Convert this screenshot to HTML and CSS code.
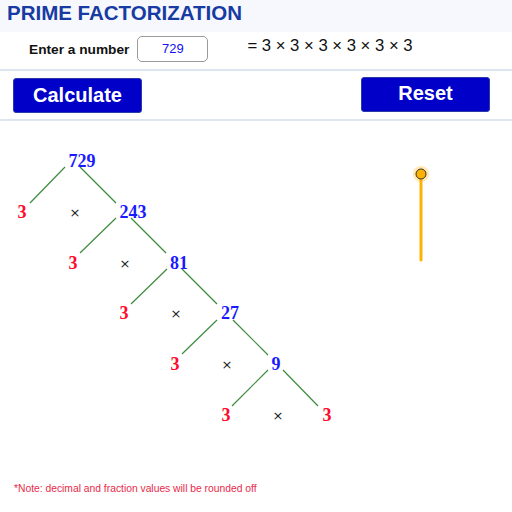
FILE: index.html
```html
<!DOCTYPE html>
<html>
<head>
<meta charset="utf-8">
<link rel="stylesheet" href="styles.css">
</head>
<body>
<div class="app">
  <div class="header"><h1 class="title">PRIME FACTORIZATION</h1></div>
  <div class="inputrow">
    <span class="label">Enter a number</span>
    <div class="numbox">729</div>
    <span class="result">= 3 × 3 × 3 × 3 × 3 × 3</span>
  </div>
  <div class="btnrow">
    <button class="btn btn-calc">Calculate</button>
    <button class="btn btn-reset">Reset</button>
  </div>
  <svg class="canvas" width="512" height="362" viewBox="0 121 512 362">
    <g class="edges">
      <line x1="65" y1="167" x2="30" y2="203"/>
      <line x1="80" y1="167" x2="116" y2="203"/>
      <line x1="116" y1="218" x2="80" y2="253"/>
      <line x1="131" y1="218" x2="166" y2="253"/>
      <line x1="167" y1="269" x2="131" y2="304"/>
      <line x1="182" y1="269" x2="217" y2="304"/>
      <line x1="217" y1="320" x2="182" y2="354"/>
      <line x1="233" y1="320" x2="268" y2="355"/>
      <line x1="268" y1="370" x2="232" y2="406"/>
      <line x1="283" y1="370" x2="318" y2="406"/>
    </g>
    <g class="comp">
      <text x="82" y="167">729</text>
      <text x="133" y="218">243</text>
      <text x="179" y="269">81</text>
      <text x="230" y="319">27</text>
      <text x="276" y="370">9</text>
    </g>
    <g class="prime">
      <text x="22" y="218">3</text>
      <text x="73" y="269">3</text>
      <text x="124" y="319">3</text>
      <text x="175" y="370">3</text>
      <text x="226" y="421">3</text>
      <text x="327" y="421">3</text>
    </g>
    <g class="times">
      <text x="75" y="217">×</text>
      <text x="125" y="268">×</text>
      <text x="176" y="318">×</text>
      <text x="227" y="369">×</text>
      <text x="278" y="420">×</text>
    </g>
    <g class="slider">
      <line x1="421" y1="174" x2="421" y2="260"/>
      <circle class="halo" cx="421" cy="174" r="8"/>
      <circle class="knob" cx="421" cy="174" r="5"/>
    </g>
  </svg>
  <p class="note">*Note: decimal and fraction values will be rounded off</p>
</div>
</body>
</html>
```
FILE: styles.css
```css
html, body {
  margin: 0;
  padding: 0;
  background: #ffffff;
  font-family: "Liberation Sans", Arial, sans-serif;
}
.app {
  width: 512px;
  height: 512px;
  overflow: hidden;
}
.header {
  height: 32px;
  background: #f6f8fd;
  padding-left: 7px;
  display: flex;
  align-items: center;
}
.title {
  margin: 0;
  font-size: 20.5px;
  font-weight: bold;
  color: #173ba2;
  line-height: 24px;
  padding-bottom: 6px;
}
.inputrow {
  height: 37px;
  border-bottom: 2px solid #dde6f0;
  display: flex;
  align-items: flex-start;
}
.label {
  margin-left: 29px;
  margin-top: 10px;
  font-size: 13.7px;
  font-weight: bold;
  color: #111;
}
.numbox {
  margin-left: 8px;
  margin-top: 4px;
  width: 69px;
  height: 24px;
  border: 1px solid #9a9a9a;
  border-radius: 5px;
  color: #1010ee;
  font-size: 13px;
  line-height: 24px;
  text-align: center;
}
.result {
  margin-left: 39px;
  margin-top: 4px;
  font-size: 16.7px;
  color: #111;
}
.btnrow {
  height: 48px;
  border-bottom: 2px solid #dde6f0;
  display: flex;
  align-items: flex-start;
}
.btn {
  width: 129px;
  height: 35px;
  background: #0000c8;
  border: 1px solid #2a3aa8;
  border-radius: 3px;
  color: #ffffff;
  font-family: "Liberation Sans", Arial, sans-serif;
  font-size: 20px;
  font-weight: bold;
  padding: 0;
}
.btn-calc {
  margin-left: 13px;
  margin-top: 7px;
}
.btn-reset {
  margin-left: 219px;
  margin-top: 6px;
  line-height: 30px;
  padding-bottom: 5px;
}
.canvas {
  display: block;
}
.edges line {
  stroke: #3d8b3d;
  stroke-width: 1.2;
}
.comp text, .prime text {
  font-family: "Liberation Serif", "Times New Roman", serif;
  font-weight: bold;
  font-size: 18px;
  text-anchor: middle;
}
.comp text { fill: #1a1aff; }
.prime text { fill: #ff0a2a; }
.times text {
  font-family: "DejaVu Sans", sans-serif;
  font-size: 13px;
  fill: #222;
  text-anchor: middle;
}
.slider line {
  stroke: #ffb300;
  stroke-width: 3;
  stroke-linecap: round;
}
.halo {
  fill: #ffb300;
  opacity: 0.3;
}
.knob {
  fill: #ffb300;
  stroke: #333;
  stroke-width: 1;
}
.note {
  margin: 0 0 0 14px;
  font-size: 10.3px;
  line-height: 12px;
  color: #e8294a;
}
```
